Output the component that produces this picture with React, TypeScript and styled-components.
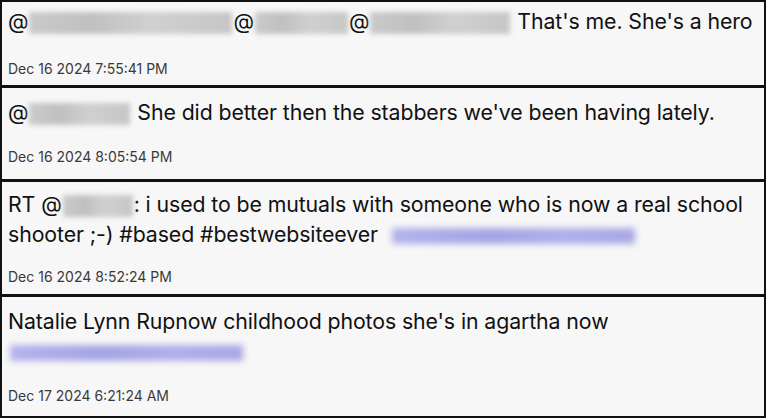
import styled, {createGlobalStyle} from "styled-components";

const GlobalStyle = createGlobalStyle`
    html, body {
        margin: 0;
        padding: 0;
        background: #ffffff;
    }
`;

type Part = {text?: string; blur?: number; link?: number; indent?: number; br?: boolean};

type Post = {
    parts: Part[];
    time: string;
    top: number;
    gap: number;
    bottom: number;
};

const posts: Post[] = [
    {
        parts: [
            {text: "@"}, {blur: 203}, {text: "@"}, {blur: 93}, {text: "@"}, {blur: 140},
            {text: " That's me. She's a hero"},
        ],
        time: "Dec 16 2024 7:55:41 PM",
        top: 4, gap: 23, bottom: 7,
    },
    {
        parts: [
            {text: "@"}, {blur: 101},
            {text: " She did better then the stabbers we've been having lately."},
        ],
        time: "Dec 16 2024 8:05:54 PM",
        top: 9, gap: 20, bottom: 13,
    },
    {
        parts: [
            {text: "RT @"}, {blur: 70},
            {text: ": i used to be mutuals with someone who is now a real school"}, {br: true},
            {text: "shooter ;-) #based #bestwebsiteever "}, {link: 243, indent: 8},
        ],
        time: "Dec 16 2024 8:52:24 PM",
        top: 7, gap: 18, bottom: 8,
    },
    {
        parts: [
            {text: "Natalie Lynn Rupnow childhood photos she's in agartha now"}, {br: true},
            {link: 233, indent: 2},
        ],
        time: "Dec 17 2024 6:21:24 AM",
        top: 9, gap: 20, bottom: 11,
    },
];

const App = () => {
    return <>
        <GlobalStyle/>
        <Feed>
            {posts.map((post, i) => <Card key={i} $top={post.top} $bottom={post.bottom}>
                <Body>
                    {post.parts.map((part, j) => {
                        if (part.br) return <br key={j}/>;
                        if (part.blur) return <Redacted key={j} style={{width: part.blur}}/>;
                        if (part.link) return <BlurredLink key={j} $indent={part.indent ?? 0} style={{width: part.link}}/>;
                        return <span key={j}>{part.text}</span>;
                    })}
                </Body>
                <Timestamp $gap={post.gap}>{post.time}</Timestamp>
            </Card>)}
        </Feed>
    </>;
};

export default App;

const Feed = styled.div`
    width: 766px;
    display: flex;
    flex-direction: column;
`;

const Card = styled.div<{$top: number; $bottom: number}>`
    border: 2px solid #111;
    background: #f7f7f7;
    padding: ${p => p.$top}px 7px ${p => p.$bottom}px 6px;
    margin-top: -1px;
    &:first-child {
        margin-top: 0;
    }
`;

const Body = styled.div`
    font-family: Inter, "Noto Sans", sans-serif;
    font-size: 21.3px;
    line-height: 30px;
    color: #111;
    letter-spacing: -0.1px;
    white-space: nowrap;
`;

const Redacted = styled.span`
    display: inline-block;
    height: 22px;
    vertical-align: -5px;
    margin: 0 1px 0 1px;
    background: linear-gradient(90deg, #cacaca, #c0c0c0 30%, #d0d0d0 60%, #c6c6c6);
    filter: blur(2.5px);
`;

const BlurredLink = styled.span<{$indent: number}>`
    display: inline-block;
    height: 16px;
    vertical-align: -2px;
    margin-left: ${p => p.$indent}px;
    background: linear-gradient(90deg, #b4b3ec, #a5a4e4 40%, #b0afe9 70%, #a9a8e6);
    filter: blur(3px);
`;

const Timestamp = styled.div<{$gap: number}>`
    margin-top: ${p => p.$gap}px;
    font-family: Inter, "Noto Sans", sans-serif;
    font-size: 14px;
    line-height: 19px;
    color: #3a3a3a;
`;
